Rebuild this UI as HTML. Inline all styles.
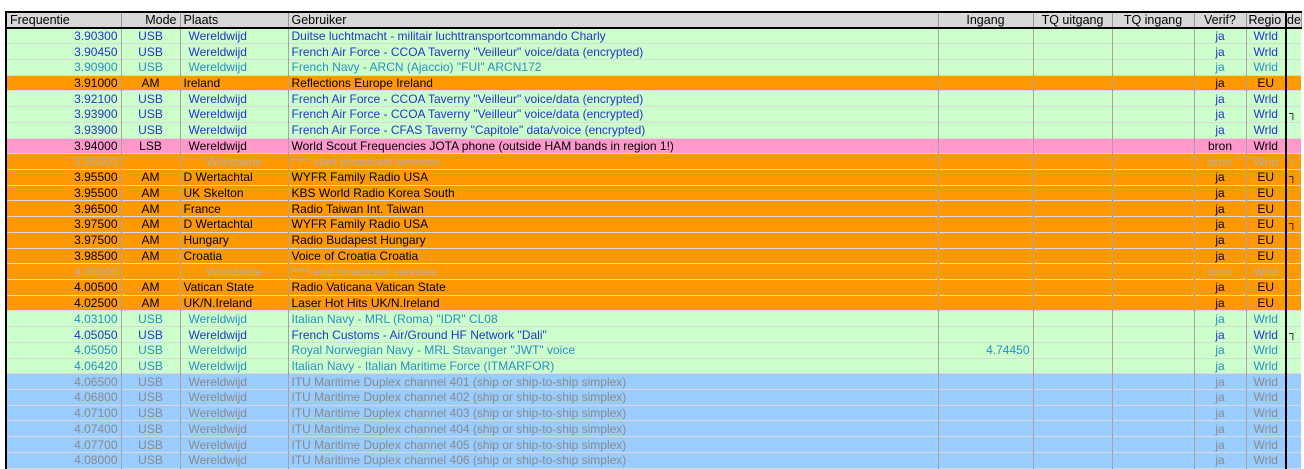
<!DOCTYPE html>
<html><head><meta charset="utf-8"><style>
body{margin:0;background:#fff;width:1304px;height:468px;overflow:hidden;font-family:"Liberation Sans",Arial,sans-serif;font-size:12px}
table{position:absolute;left:5px;top:11px;border-collapse:collapse;table-layout:fixed;width:1295px}
tr{height:15.72px}
td{padding:1px 3px 0 3px;border-left:1px solid rgba(0,0,0,0.35);border-right:1px solid rgba(0,0,0,0.35);border-top:1px solid rgba(0,0,0,0.15);border-bottom:1px solid rgba(0,0,0,0.15);white-space:nowrap;overflow:hidden;line-height:13px}
tr.h{height:16px}
tr.h td{background:#d8d8d8;color:#000;border-top:2px solid #000;border-bottom:2px solid #000;border-left:1px solid #999;border-right:1px solid #999;font-size:12.5px;padding-top:0}
td.f{text-align:right}
td.c{text-align:center}
td.p{padding-left:8px}
.g td{background:#ccffcc;color:#2036cc}
.t td{background:#ccffcc;color:#2a8fc0}
.o td{background:#ff9900;color:#000}
.og td{background:#ff9900;color:#b0b0b0}
.k td{background:#ff99cc;color:#000}
.b td{background:#99ccff;color:#8a8a8a}
td.x{border-left:2px solid #000 !important;border-right:none;padding:0 0 0 2px;font-size:11px;color:#000}
tr td:first-child{border-left:2px solid #000}
.og td.x{color:#b0b0b0}
</style></head><body>
<table>
<colgroup><col style="width:115px"><col style="width:59px"><col style="width:108px"><col style="width:650px"><col style="width:95px"><col style="width:79px"><col style="width:82px"><col style="width:52px"><col style="width:40px"><col style="width:15px"></colgroup>
<tr class="h"><td>Frequentie</td><td style="text-align:right">Mode</td><td>Plaats</td><td>Gebruiker</td><td class="c">Ingang</td><td class="c">TQ uitgang</td><td class="c">TQ ingang</td><td class="c">Verif?</td><td style="padding:0 0 0 2px">Regio</td><td class="x" style="font-size:12.5px;padding:0">de</td></tr>
<tr class="g"><td class="f">3.90300</td><td class="c">USB</td><td class="p">Wereldwijd</td><td>Duitse luchtmacht - militair luchttransportcommando Charly</td><td></td><td></td><td></td><td class="c">ja</td><td class="c">Wrld</td><td class="x"></td></tr>
<tr class="g"><td class="f">3.90450</td><td class="c">USB</td><td class="p">Wereldwijd</td><td>French Air Force - CCOA Taverny "Veilleur" voice/data (encrypted)</td><td></td><td></td><td></td><td class="c">ja</td><td class="c">Wrld</td><td class="x"></td></tr>
<tr class="t"><td class="f">3.90900</td><td class="c">USB</td><td class="p">Wereldwijd</td><td>French Navy - ARCN (Ajaccio) "FUI" ARCN172</td><td></td><td></td><td></td><td class="c">ja</td><td class="c">Wrld</td><td class="x"></td></tr>
<tr class="o"><td class="f">3.91000</td><td class="c">AM</td><td>Ireland</td><td>Reflections Europe Ireland</td><td></td><td></td><td></td><td class="c">ja</td><td class="c">EU</td><td class="x"></td></tr>
<tr class="g"><td class="f">3.92100</td><td class="c">USB</td><td class="p">Wereldwijd</td><td>French Air Force - CCOA Taverny "Veilleur" voice/data (encrypted)</td><td></td><td></td><td></td><td class="c">ja</td><td class="c">Wrld</td><td class="x"></td></tr>
<tr class="g"><td class="f">3.93900</td><td class="c">USB</td><td class="p">Wereldwijd</td><td>French Air Force - CCOA Taverny "Veilleur" voice/data (encrypted)</td><td></td><td></td><td></td><td class="c">ja</td><td class="c">Wrld</td><td class="x">┐</td></tr>
<tr class="g"><td class="f">3.93900</td><td class="c">USB</td><td class="p">Wereldwijd</td><td>French Air Force - CFAS Taverny "Capitole" data/voice (encrypted)</td><td></td><td></td><td></td><td class="c">ja</td><td class="c">Wrld</td><td class="x"></td></tr>
<tr class="k"><td class="f">3.94000</td><td class="c">LSB</td><td class="p">Wereldwijd</td><td>World Scout Frequencies JOTA phone (outside HAM bands in region 1!)</td><td></td><td></td><td></td><td class="c">bron</td><td class="c">Wrld</td><td class="x"></td></tr>
<tr class="og"><td class="f">3.95000</td><td></td><td class="c">Worldwide</td><td>**** start broadcast services</td><td></td><td></td><td></td><td class="c">bron</td><td class="c">Wrld</td><td class="x">┐</td></tr>
<tr class="o"><td class="f">3.95500</td><td class="c">AM</td><td>D Wertachtal</td><td>WYFR Family Radio USA</td><td></td><td></td><td></td><td class="c">ja</td><td class="c">EU</td><td class="x">┐</td></tr>
<tr class="o"><td class="f">3.95500</td><td class="c">AM</td><td>UK Skelton</td><td>KBS World Radio Korea South</td><td></td><td></td><td></td><td class="c">ja</td><td class="c">EU</td><td class="x"></td></tr>
<tr class="o"><td class="f">3.96500</td><td class="c">AM</td><td>France</td><td>Radio Taiwan Int. Taiwan</td><td></td><td></td><td></td><td class="c">ja</td><td class="c">EU</td><td class="x"></td></tr>
<tr class="o"><td class="f">3.97500</td><td class="c">AM</td><td>D Wertachtal</td><td>WYFR Family Radio USA</td><td></td><td></td><td></td><td class="c">ja</td><td class="c">EU</td><td class="x">┐</td></tr>
<tr class="o"><td class="f">3.97500</td><td class="c">AM</td><td>Hungary</td><td>Radio Budapest Hungary</td><td></td><td></td><td></td><td class="c">ja</td><td class="c">EU</td><td class="x"></td></tr>
<tr class="o"><td class="f">3.98500</td><td class="c">AM</td><td>Croatia</td><td>Voice of Croatia Croatia</td><td></td><td></td><td></td><td class="c">ja</td><td class="c">EU</td><td class="x"></td></tr>
<tr class="og"><td class="f">4.00000</td><td></td><td class="c">Worldwide</td><td>**** end broadcast services</td><td></td><td></td><td></td><td class="c">bron</td><td class="c">Wrld</td><td class="x"></td></tr>
<tr class="o"><td class="f">4.00500</td><td class="c">AM</td><td>Vatican State</td><td>Radio Vaticana Vatican State</td><td></td><td></td><td></td><td class="c">ja</td><td class="c">EU</td><td class="x"></td></tr>
<tr class="o"><td class="f">4.02500</td><td class="c">AM</td><td>UK/N.Ireland</td><td>Laser Hot Hits UK/N.Ireland</td><td></td><td></td><td></td><td class="c">ja</td><td class="c">EU</td><td class="x"></td></tr>
<tr class="t"><td class="f">4.03100</td><td class="c">USB</td><td class="p">Wereldwijd</td><td>Italian Navy - MRL (Roma) "IDR" CL08</td><td></td><td></td><td></td><td class="c">ja</td><td class="c">Wrld</td><td class="x"></td></tr>
<tr class="g"><td class="f">4.05050</td><td class="c">USB</td><td class="p">Wereldwijd</td><td>French Customs - Air/Ground HF Network "Dali"</td><td></td><td></td><td></td><td class="c">ja</td><td class="c">Wrld</td><td class="x">┐</td></tr>
<tr class="t"><td class="f">4.05050</td><td class="c">USB</td><td class="p">Wereldwijd</td><td>Royal Norwegian Navy - MRL Stavanger "JWT" voice</td><td class="f">4.74450</td><td></td><td></td><td class="c">ja</td><td class="c">Wrld</td><td class="x"></td></tr>
<tr class="t"><td class="f">4.06420</td><td class="c">USB</td><td class="p">Wereldwijd</td><td>Italian Navy - Italian Maritime Force (ITMARFOR)</td><td></td><td></td><td></td><td class="c">ja</td><td class="c">Wrld</td><td class="x"></td></tr>
<tr class="b"><td class="f">4.06500</td><td class="c">USB</td><td class="p">Wereldwijd</td><td>ITU Maritime Duplex channel 401 (ship or ship-to-ship simplex)</td><td></td><td></td><td></td><td class="c">ja</td><td class="c">Wrld</td><td class="x"></td></tr>
<tr class="b"><td class="f">4.06800</td><td class="c">USB</td><td class="p">Wereldwijd</td><td>ITU Maritime Duplex channel 402 (ship or ship-to-ship simplex)</td><td></td><td></td><td></td><td class="c">ja</td><td class="c">Wrld</td><td class="x"></td></tr>
<tr class="b"><td class="f">4.07100</td><td class="c">USB</td><td class="p">Wereldwijd</td><td>ITU Maritime Duplex channel 403 (ship or ship-to-ship simplex)</td><td></td><td></td><td></td><td class="c">ja</td><td class="c">Wrld</td><td class="x"></td></tr>
<tr class="b"><td class="f">4.07400</td><td class="c">USB</td><td class="p">Wereldwijd</td><td>ITU Maritime Duplex channel 404 (ship or ship-to-ship simplex)</td><td></td><td></td><td></td><td class="c">ja</td><td class="c">Wrld</td><td class="x"></td></tr>
<tr class="b"><td class="f">4.07700</td><td class="c">USB</td><td class="p">Wereldwijd</td><td>ITU Maritime Duplex channel 405 (ship or ship-to-ship simplex)</td><td></td><td></td><td></td><td class="c">ja</td><td class="c">Wrld</td><td class="x"></td></tr>
<tr class="b"><td class="f">4.08000</td><td class="c">USB</td><td class="p">Wereldwijd</td><td>ITU Maritime Duplex channel 406 (ship or ship-to-ship simplex)</td><td></td><td></td><td></td><td class="c">ja</td><td class="c">Wrld</td><td class="x"></td></tr>
</table>
</body></html>
